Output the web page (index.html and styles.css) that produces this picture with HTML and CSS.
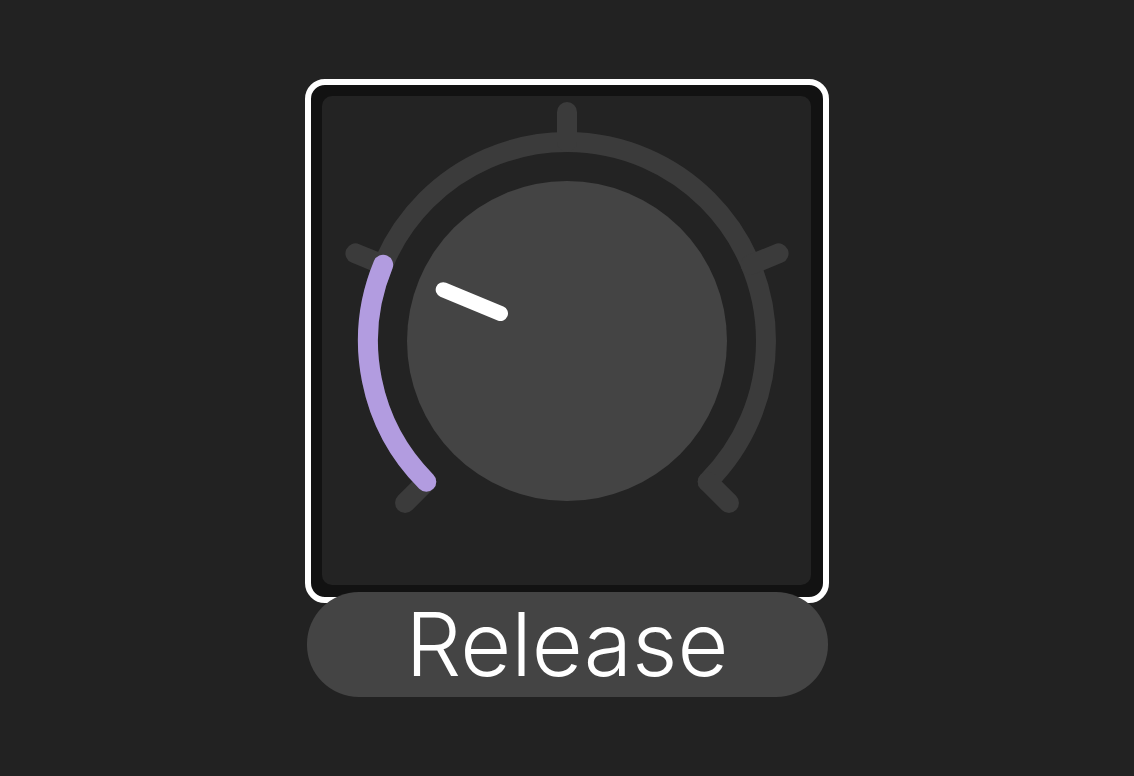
FILE: index.html
```html
<!DOCTYPE html>
<html lang="en">
  <head>
    <meta charset="UTF-8" />
    <meta name="viewport" content="width=device-width, initial-scale=1.0" />
    <title>Release Knob</title>
    <link rel="stylesheet" href="styles.css">
  </head>
  <body>
    <div class="control">
      <div class="knob-frame">
        <div class="knob-panel">
          <svg class="knob" viewBox="0 0 488 488" width="488" height="488">
            <!-- track: 270 degree sweep, -135 to +135 -->
            <path class="track" d="M103.29 384.71 A199 199 0 1 1 384.71 384.71" />
            <line class="tick" x1="103.29" y1="384.71" x2="82.07" y2="405.93" />
            <line class="tick" x1="60.15" y1="167.85" x2="32.43" y2="156.37" />
            <line class="tick" x1="244" y1="45" x2="244" y2="15" />
            <line class="tick" x1="427.85" y1="167.85" x2="455.57" y2="156.37" />
            <line class="tick" x1="384.71" y1="384.71" x2="405.93" y2="405.93" />
            <!-- value arc -->
            <path class="value" d="M103.29 384.71 A199 199 0 0 1 60.15 167.85" />
            <circle class="cap" cx="244" cy="244" r="160" />
            <line class="pointer" x1="177.48" y1="216.45" x2="120.2" y2="192.7" />
          </svg>
        </div>
      </div>
      <div class="label">Release</div>
    </div>
  </body>
</html>
```

FILE: styles.css
```css
body,
html {
  height: 100%;
  margin: 0;
  overflow: hidden;
  font-family: Inter, "Noto Sans", sans-serif;
}
body {
  display: flex;
  justify-content: center;
  align-items: center;
  background: #222222;
}
.control {
  display: flex;
  flex-direction: column;
  align-items: center;
}
.knob-frame {
  box-sizing: border-box;
  width: 524px;
  height: 524px;
  padding: 11px 12px 12px 11px;
  border: 6px solid #ffffff;
  border-radius: 20px;
  background: #121212;
}
.knob-panel {
  width: 489px;
  height: 489px;
  border-radius: 10px;
  background: #232323;
  display: flex;
  justify-content: center;
  align-items: center;
}
.knob {
  display: block;
}
.track {
  fill: none;
  stroke: #3b3b3b;
  stroke-width: 20;
  stroke-linecap: round;
}
.tick {
  stroke: #3b3b3b;
  stroke-width: 20;
  stroke-linecap: round;
}
.value {
  fill: none;
  stroke: #b29ce0;
  stroke-width: 20;
  stroke-linecap: round;
}
.cap {
  fill: #444444;
}
.pointer {
  stroke: #ffffff;
  stroke-width: 15;
  stroke-linecap: round;
}
.label {
  box-sizing: border-box;
  width: 521px;
  height: 105px;
  margin-top: -11px;
  border-radius: 52px;
  background: #444444;
  color: #ffffff;
  font-size: 88px;
  font-weight: 300;
  line-height: 105px;
  text-align: center;
}
```
